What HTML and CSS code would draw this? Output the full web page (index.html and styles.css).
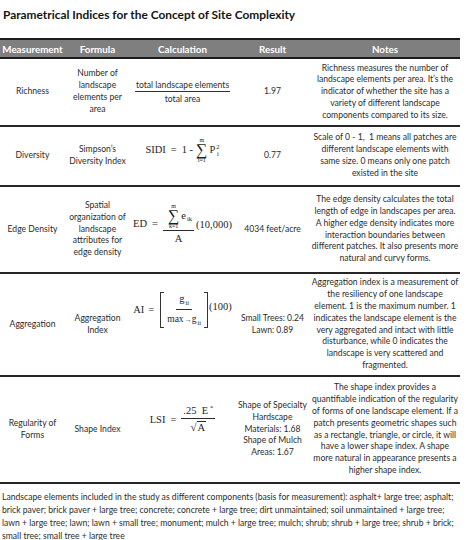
FILE: index.html
```html
<!DOCTYPE html>
<html lang="en">
<head>
<meta charset="utf-8">
<title>Parametrical Indices for the Concept of Site Complexity</title>
<link rel="stylesheet" href="styles.css">
</head>
<body>
<div class="page">
  <h1 class="title">Parametrical Indices for the Concept of Site Complexity</h1>
  <table class="grid">
    <colgroup>
      <col class="c-meas"><col class="c-form"><col class="c-calc"><col class="c-res"><col class="c-note">
    </colgroup>
    <thead>
      <tr><th>Measurement</th><th>Formula</th><th>Calculation</th><th>Result</th><th>Notes</th></tr>
    </thead>
    <tbody>
      <tr class="r-rich">
        <td>Richness</td>
        <td>Number of<br>landscape<br>elements per<br>area</td>
        <td>
          <span class="frac txtfrac"><span class="num">total landscape elements</span><span class="den">total area</span></span>
        </td>
        <td>1.97</td>
        <td>Richness measures the number of<br>landscape elements per area. It’s the<br>indicator of whether the site has a<br>variety of different landscape<br>components compared to its size.</td>
      </tr>
      <tr class="r-div">
        <td>Diversity</td>
        <td>Simpson’s<br>Diversity Index</td>
        <td class="calc-top">
          <span class="math">SIDI<span class="op">=</span>1 -<span class="bigop"><span class="lim">m</span><span class="sym">∑</span><span class="lim">i=1</span></span>P<span class="subsup"><span class="sp">2</span><span class="sb">i</span></span></span>
        </td>
        <td>0.77</td>
        <td>Scale of 0 - 1,&nbsp; 1 means all patches are<br>different landscape elements with<br>same size. 0 means only one patch<br>existed in the site</td>
      </tr>
      <tr class="r-edge">
        <td>Edge Density</td>
        <td>Spatial<br>organization of<br>landscape<br>attributes for<br>edge density</td>
        <td class="calc-top">
          <span class="math">ED<span class="op">=</span><span class="frac"><span class="num"><span class="bigop"><span class="lim">m</span><span class="sym">∑</span><span class="lim">k=1</span></span>e<span class="sb solo">ik</span></span><span class="den">A</span></span><span class="after">(10,000)</span></span>
        </td>
        <td>4034 feet/acre</td>
        <td>The edge density calculates the total<br>length of edge in landscapes per area.<br>A higher edge density indicates more<br>interaction boundaries between<br>different patches. It also presents more<br>natural and curvy forms.</td>
      </tr>
      <tr class="r-agg">
        <td>Aggregation</td>
        <td>Aggregation<br>Index</td>
        <td class="calc-top">
          <span class="math">AI<span class="op">=</span><span class="brk brk-l"></span><span class="frac wide"><span class="num">g<span class="sb solo">ii</span></span><span class="den">max<span class="arrow">→</span>g<span class="sb solo">ii</span></span></span><span class="brk brk-r"></span><span class="after tight">(100)</span></span>
        </td>
        <td>Small Trees: 0.24<br>Lawn: 0.89</td>
        <td>Aggregation index is a measurement of<br>the resiliency of one landscape<br>element. 1 is the maximum number. 1<br>indicates the landscape element is the<br>very aggregated and intact with little<br>disturbance, while 0 indicates the<br>landscape is very scattered and<br>fragmented.</td>
      </tr>
      <tr class="r-shape">
        <td>Regularity of<br>Forms</td>
        <td>Shape Index</td>
        <td class="calc-top">
          <span class="math">LSI<span class="op">=</span><span class="frac"><span class="num">.25&nbsp; E<span class="sp solo">*</span></span><span class="den"><span class="root">√</span><span class="radicand">A</span></span></span></span>
        </td>
        <td>Shape of Specialty<br>Hardscape<br>Materials: 1.68<br>Shape of Mulch<br>Areas: 1.67</td>
        <td>The shape index provides a<br>quantifiable indication of the regularity<br>of forms of one landscape element. If a<br>patch presents geometric shapes such<br>as a rectangle, triangle, or circle, it will<br>have a lower shape index. A shape<br>more natural in appearance presents a<br>higher shape index.</td>
      </tr>
    </tbody>
  </table>
  <p class="foot">Landscape elements included in the study as different components (basis for measurement): asphalt+ large tree; asphalt;<br>brick paver; brick paver + large tree; concrete; concrete + large tree; dirt unmaintained; soil unmaintained + large tree;<br>lawn + large tree; lawn; lawn + small tree; monument; mulch + large tree; mulch; shrub; shrub + large tree; shrub + brick;<br>small tree; small tree + large tree</p>
</div>
</body>
</html>
```

FILE: styles.css
```css
html, body {
  margin: 0;
  padding: 0;
  background: #ffffff;
}

body {
  font-family: Lato, "Liberation Sans", sans-serif;
  color: #2c2c2c;
}

.page {
  width: 474px;
}

.title {
  margin: 0;
  padding: 7px 0 0 3px;
  height: 38px;
  box-sizing: border-box;
  font-size: 11.9px;
  line-height: 15px;
  font-weight: 700;
  color: #151515;
  white-space: nowrap;
}

.grid {
  width: 460px;
  border-collapse: collapse;
  table-layout: fixed;
}

.c-meas { width: 65px; }
.c-form { width: 65px; }
.c-calc { width: 105px; }
.c-res  { width: 75px; }
.c-note { width: 150px; }

.grid th {
  background: #7f7f7f;
  color: #ffffff;
  font-size: 9.8px;
  font-weight: 700;
  height: 17px;
  padding: 0;
  border-top: 2px solid #1c1c1c;
  border-bottom: 2px solid #1c1c1c;
  text-align: center;
}

.grid td {
  text-align: center;
  vertical-align: middle;
  font-size: 8.6px;
  line-height: 11.8px;
  padding: 0 1px;
  border-bottom: 2px solid #262626;
  white-space: nowrap;
}

.r-rich  { height: 68px; }
.r-div   { height: 60px; }
.r-edge  { height: 87px; }
.r-agg   { height: 103px; }
.r-shape { height: 107px; }

.grid td.calc-top {
  padding-bottom: 12px;
}

.r-agg td.calc-top {
  padding-bottom: 30px;
}

.r-shape td.calc-top {
  padding-bottom: 20px;
}

/* math */
.math {
  display: inline-flex;
  align-items: center;
  font-family: "Liberation Serif", "Times New Roman", serif;
  font-size: 10.5px;
  line-height: 12px;
  color: #1e1e1e;
  white-space: nowrap;
}

.op {
  margin: 0 5px;
}

.bigop {
  display: inline-flex;
  flex-direction: column;
  align-items: center;
  margin: 0 2px 0 3px;
}

.bigop .lim {
  font-size: 6px;
  line-height: 6px;
}

.bigop .sym {
  font-size: 16px;
  line-height: 14px;
}

.subsup {
  display: inline-flex;
  flex-direction: column;
  margin-left: 1px;
}

.sp, .sb {
  font-size: 6.5px;
  line-height: 7px;
}

.sb.solo {
  position: relative;
  top: 3px;
  margin-left: 1px;
}

.sp.solo {
  position: relative;
  top: -4px;
  margin-left: 2px;
}

.frac {
  display: inline-flex;
  flex-direction: column;
  align-items: center;
}

.frac .num {
  display: inline-flex;
  align-items: center;
  padding: 0 2px 1px;
  border-bottom: 1px solid #2a2a2a;
}

.frac .den {
  padding-top: 2px;
}

.frac.wide .num,
.frac.wide .den {
  padding-left: 3px;
  padding-right: 3px;
}

.frac.wide .num {
  padding-bottom: 4px;
}

.frac.wide .den {
  padding-top: 3px;
  font-size: 9.5px;
}

.arrow {
  font-size: 7px;
  margin: 0 0 0 1px;
}

.txtfrac {
  font-size: 8.6px;
  line-height: 12px;
}

.txtfrac .num {
  padding: 0 1px 0;
  border-bottom: 1px solid #333;
}

.txtfrac .den {
  padding-top: 1px;
}

.after {
  margin-left: 2px;
  position: relative;
  top: 1px;
}

.after.tight {
  margin-left: 1px;
  top: -3px;
}

.brk {
  display: inline-block;
  width: 3px;
  height: 34px;
  border-top: 1px solid #333;
  border-bottom: 1px solid #333;
}

.brk-l {
  border-left: 1px solid #333;
  margin-left: 2px;
}

.brk-r {
  border-right: 1px solid #333;
}

.r-agg .op {
  margin: 0 4px;
}

.root {
  font-size: 11px;
}

.radicand {
  border-top: 1px solid #2a2a2a;
  padding: 0 1px;
  line-height: 11px;
}

.foot {
  margin: 6px 0 0 2px;
  font-size: 8.65px;
  line-height: 13px;
  color: #2c2c2c;
  white-space: nowrap;
}
```
